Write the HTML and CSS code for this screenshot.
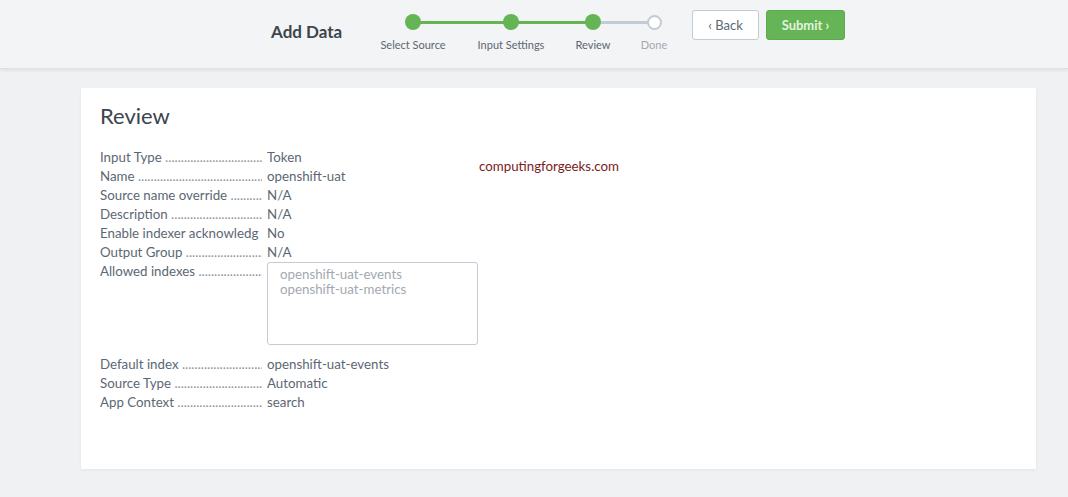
FILE: index.html
```html
<!DOCTYPE html>
<html lang="en">
<head>
    <meta charset="UTF-8">
    <meta name="viewport" content="width=device-width, initial-scale=1.0">
    <title>Add Data - Review</title>
    <link rel="stylesheet" href="styles.css">
</head>
<body>
    <header class="topbar">
        <h1 class="page-title">Add Data</h1>

        <ol class="stepper">
            <li class="step step-1 done"><span class="dot"></span><span class="step-label">Select Source</span></li>
            <li class="step step-2 done"><span class="dot"></span><span class="step-label">Input Settings</span></li>
            <li class="step step-3 current"><span class="dot"></span><span class="step-label">Review</span></li>
            <li class="step step-4"><span class="dot"></span><span class="step-label">Done</span></li>
        </ol>

        <div class="actions">
            <button class="btn btn-back">&lsaquo; Back</button>
            <button class="btn btn-submit">Submit &rsaquo;</button>
        </div>
    </header>

    <main class="card">
        <h2>Review</h2>

        <div class="review">
            <div class="summary">
                <div class="row"><span class="key">Input Type</span><span class="val">Token</span></div>
                <div class="row"><span class="key">Name</span><span class="val">openshift-uat</span></div>
                <div class="row"><span class="key">Source name override</span><span class="val">N/A</span></div>
                <div class="row"><span class="key">Description</span><span class="val">N/A</span></div>
                <div class="row"><span class="key no-leader">Enable indexer acknowledg</span><span class="val">No</span></div>
                <div class="row"><span class="key">Output Group</span><span class="val">N/A</span></div>
                <div class="row row-list">
                    <span class="key">Allowed indexes</span>
                    <div class="index-box">
                        <div>openshift-uat-events</div>
                        <div>openshift-uat-metrics</div>
                    </div>
                </div>
                <div class="row"><span class="key">Default index</span><span class="val">openshift-uat-events</span></div>
                <div class="row"><span class="key">Source Type</span><span class="val">Automatic</span></div>
                <div class="row"><span class="key">App Context</span><span class="val">search</span></div>
            </div>

            <p class="watermark">computingforgeeks.com</p>
        </div>
    </main>
</body>
</html>
```

FILE: styles.css
```css
* {
    margin: 0;
    padding: 0;
    box-sizing: border-box;
    font-family: 'Lato', 'Liberation Sans', sans-serif;
}

body {
    background: #eff1f3;
    color: #5c6773;
    height: 100vh;
    overflow: hidden;
}

/* top bar with wizard steps */
.topbar {
    height: 69px;
    background: #f3f4f5;
    border-bottom: 1px solid #dde1e5;
    box-shadow: 0 2px 3px rgba(0, 0, 0, 0.06);
    display: flex;
    align-items: flex-start;
    padding-left: 271px;
}

.page-title {
    width: 92px;
    margin-top: 21px;
    font-size: 17px;
    font-weight: bold;
    color: #3c444d;
}

.stepper {
    list-style: none;
    display: flex;
    margin-top: 14px;
}

.step {
    position: relative;
    display: flex;
    flex-direction: column;
    align-items: center;
}

.step-1 { width: 100px; }
.step-2 { width: 96px; }
.step-3 { width: 68px; }
.step-4 { width: 54px; }

.step::after {
    content: "";
    position: absolute;
    top: 7px;
    left: 50%;
    height: 3px;
    background: #c3cbd4;
    z-index: 0;
}

.step-1::after { width: 98px; background: #65b556; }
.step-2::after { width: 82px; background: #65b556; }
.step-3::after { width: 61px; }
.step-4::after { display: none; }

.dot {
    position: relative;
    z-index: 1;
    width: 16px;
    height: 16px;
    border-radius: 50%;
    background: #65b556;
}

.step-4 .dot {
    background: #fff;
    border: 2px solid #c3cbd4;
    width: 15px;
    height: 15px;
    margin-top: 1px;
}

.step-label {
    margin-top: 8px;
    font-size: 11px;
    white-space: nowrap;
    color: #5c6773;
}

.step-4 .step-label {
    color: #a2a9b1;
}

.actions {
    display: flex;
    gap: 7px;
    margin-top: 10px;
    margin-left: 11px;
}

.btn {
    height: 30px;
    border-radius: 3px;
    font-size: 13px;
    cursor: pointer;
}

.btn-back {
    width: 67px;
    background: #fff;
    border: 1px solid #c3cbd4;
    color: #5c6773;
}

.btn-submit {
    width: 79px;
    background: #65b556;
    border: 1px solid #5eaa4f;
    color: #e3f2df;
    font-weight: bold;
}

/* review card */
.card {
    background: #fff;
    margin: 19px 32px 0 81px;
    height: 381px;
    padding: 14px 19px;
    box-shadow: 0 1px 3px rgba(0, 0, 0, 0.06);
}

.card h2 {
    font-size: 22px;
    font-weight: normal;
    color: #3c444d;
    margin-bottom: 19px;
}

.review {
    display: flex;
}

.row {
    display: flex;
    font-size: 13.3px;
    line-height: 19px;
}

.key {
    width: 162px;
    margin-right: 5px;
    overflow: hidden;
    white-space: nowrap;
}

.key::after {
    content: " ................................................................";
    color: #8d959e;
}

.key.no-leader::after {
    content: none;
}

.val {
    white-space: nowrap;
}

.row-list {
    margin-bottom: 10px;
}

.index-box {
    width: 211px;
    height: 83px;
    border: 1px solid #c3cbd4;
    border-radius: 3px;
    padding: 4px 12px;
    line-height: 15px;
    color: #a2a9b1;
}

.watermark {
    margin-left: 1px;
    margin-top: 9px;
    font-size: 13.3px;
    line-height: 19px;
    color: #7a1c1c;
}
```
